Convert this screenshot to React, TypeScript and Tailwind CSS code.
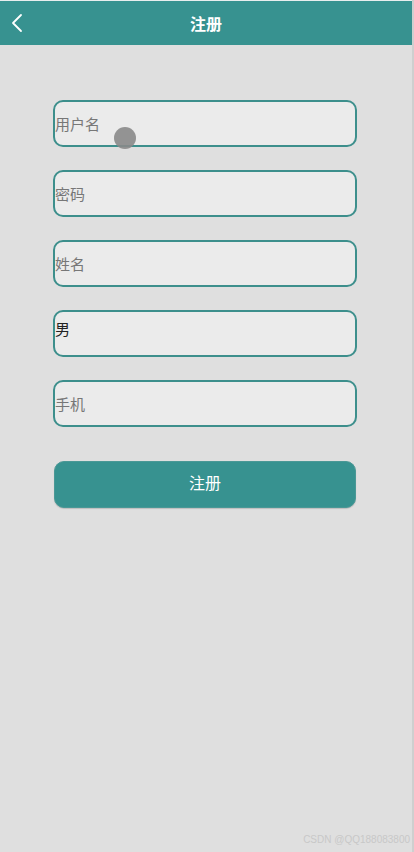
import React from "react";

export default function App() {
  const fields = [
    { label: "用户名", filled: false },
    { label: "密码", filled: false },
    { label: "姓名", filled: false },
    { label: "男", filled: true },
    { label: "手机", filled: false },
  ];
  return (
    <div
      className="relative w-[414px] h-[852px] bg-[#dfdfdf] overflow-hidden flex"
      style={{ fontFamily: '"Microsoft YaHei", "Noto Sans CJK SC", sans-serif' }}
    >
      <div className="w-[412px] flex flex-col">
        <div className="h-[1px] bg-[#e8eeee]" />
        <div className="relative h-[44px] bg-[#379290] flex items-center justify-center">
          <svg className="absolute left-[10px] top-[12px]" width="14" height="20" viewBox="0 0 14 20" fill="none">
            <path d="M11 2 L3 10 L11 18" stroke="#ffffff" strokeWidth="1.8" strokeLinecap="round" strokeLinejoin="round" />
          </svg>
          <span className="text-white text-[16px] font-bold">注册</span>
        </div>
        <div className="flex flex-col pl-[53px] pt-[55px] gap-[23px]">
          {fields.map((f) => (
            <div
              key={f.label}
              className="w-[304px] h-[47px] rounded-[10px] border-2 border-[#3d8f8c] bg-[#ebebeb] flex items-center"
            >
              <span
                className={`text-[15px] ${f.filled ? "text-[#222] -mt-[8px]" : "text-[#777] mt-[2px]"}`}
              >
                {f.label}
              </span>
            </div>
          ))}
          <div className="mt-[11px] ml-[1px] w-[302px] h-[47px] rounded-[10px] bg-[#379290] border border-[#4a9896] shadow-[0_1px_1px_rgba(0,0,0,0.15)] flex items-center justify-center">
            <span className="text-white text-[16px] -mt-[5px]">注册</span>
          </div>
        </div>
        <div className="mt-auto flex justify-end pr-[2px] pb-[5px]">
          <span className="text-[10px] text-[#c8c8c8]" style={{ fontFamily: '"Liberation Sans", sans-serif' }}>
            CSDN @QQ188083800
          </span>
        </div>
      </div>
      <div className="w-[2px] bg-[#cfcfcf]" />
      <div className="absolute left-[114px] top-[127px] w-[22px] h-[22px] rounded-full bg-[#8a8a8a] opacity-90" />
    </div>
  );
}
